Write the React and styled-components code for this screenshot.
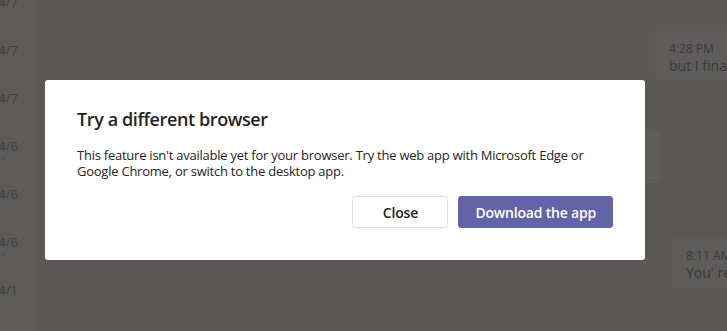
import React from "react";
import styled, { createGlobalStyle } from "styled-components";

const Global = createGlobalStyle`
  html, body { margin: 0; padding: 0; }
  body {
    width: 727px;
    height: 331px;
    overflow: hidden;
    font-family: "Open Sans", "Noto Sans", sans-serif;
    background: #5a5958;
  }
`;

const Page = styled.div`
  display: grid;
  grid-template-columns: 36px 1fr;
  width: 727px;
  height: 331px;
  overflow: hidden;
  position: relative;
`;

const DateColumn = styled.div`
  background: #5d5c5b;
  display: flex;
  flex-direction: column;
  align-items: flex-end;
  margin-top: -6px;
  overflow: hidden;
`;

const DateItem = styled.div`
  height: 48px;
  width: 36px;
  display: flex;
  flex-direction: column;
  align-items: flex-end;
  padding-right: 18px;
  box-sizing: border-box;
  font-size: 13px;
  line-height: 16px;
  color: #3c3b3a;
  white-space: nowrap;
`;

const Tick = styled.span`
  font-size: 10px;
  line-height: 8px;
  margin-top: 4px;
  align-self: flex-start;
  padding-left: 2px;
`;

const Chat = styled.div`
  display: flex;
  flex-direction: column;
  align-items: flex-end;
  padding-top: 31px;
  overflow: hidden;
`;

const Bubble = styled.div`
  background: #5e5d5c;
  box-sizing: border-box;
  height: ${(p) => p.$h}px;
  width: ${(p) => p.$w}px;
  margin-top: ${(p) => p.$mt}px;
  margin-right: ${(p) => p.$mr || 0}px;
  padding: 9px 14px 0;
  white-space: nowrap;
  overflow: hidden;
  color: #3a3938;
  border-radius: 3px 0 0 3px;
`;

const Time = styled.div`
  font-size: 12px;
  line-height: 17px;
`;

const Text = styled.div`
  font-size: 14px;
  line-height: 18px;
`;

const Overlay = styled.div`
  position: absolute;
  inset: 0;
  padding: 80px 0 0 45px;
`;

const Dialog = styled.div`
  width: 600px;
  height: 180px;
  box-sizing: border-box;
  background: #ffffff;
  border-radius: 3px;
  padding: 27px 32px 32px;
  display: flex;
  flex-direction: column;
  color: #252423;
`;

const Title = styled.h2`
  margin: 0;
  font-size: 18px;
  font-weight: 600;
  line-height: 24px;
  letter-spacing: -0.4px;
`;

const Body = styled.p`
  margin: 16px 0 0;
  font-size: 13px;
  line-height: 16px;
  letter-spacing: -0.24px;
`;

const Actions = styled.div`
  margin-top: auto;
  display: flex;
  justify-content: flex-end;
  gap: 10px;
`;

const Button = styled.button`
  height: 32px;
  box-sizing: border-box;
  padding: 0 ${(p) => (p.$primary ? 16 : 20)}px;
  min-width: 96px;
  border-radius: 3px;
  font-family: inherit;
  font-size: 14px;
  font-weight: 600;
  letter-spacing: -0.2px;
  cursor: pointer;
  border: 1px solid ${(p) => (p.$primary ? "#6264a7" : "#e1dfdd")};
  background: ${(p) => (p.$primary ? "#6264a7" : "#ffffff")};
  color: ${(p) => (p.$primary ? "#ffffff" : "#252423")};
`;

const dates = [
  { d: "4/7" },
  { d: "4/7" },
  { d: "4/7" },
  { d: "4/6", t: true },
  { d: "4/6" },
  { d: "4/6", t: true },
  { d: "4/1" },
];

export default function App() {
  return (
    <>
      <Global />
      <Page>
        <DateColumn>
          {dates.map((x, i) => (
            <DateItem key={i}>
              {x.d}
              {x.t && <Tick>'</Tick>}
            </DateItem>
          ))}
        </DateColumn>
        <Chat>
          <Bubble $h={49} $w={72} $mt={0}>
            <Time>4:28 PM</Time>
            <Text>but I finally got it</Text>
          </Bubble>
          <Bubble $h={53} $w={120} $mt={50} $mr={67} />
          <Bubble $h={50} $w={55} $mt={55}>
            <Time>8:11 AM</Time>
            <Text>You' re welcome</Text>
          </Bubble>
        </Chat>
        <Overlay>
          <Dialog role="dialog">
            <Title>Try a different browser</Title>
            <Body>
              This feature isn't available yet for your browser. Try the web app with Microsoft Edge or
              <br />
              Google Chrome, or switch to the desktop app.
            </Body>
            <Actions>
              <Button>Close</Button>
              <Button $primary>Download the app</Button>
            </Actions>
          </Dialog>
        </Overlay>
      </Page>
    </>
  );
}
